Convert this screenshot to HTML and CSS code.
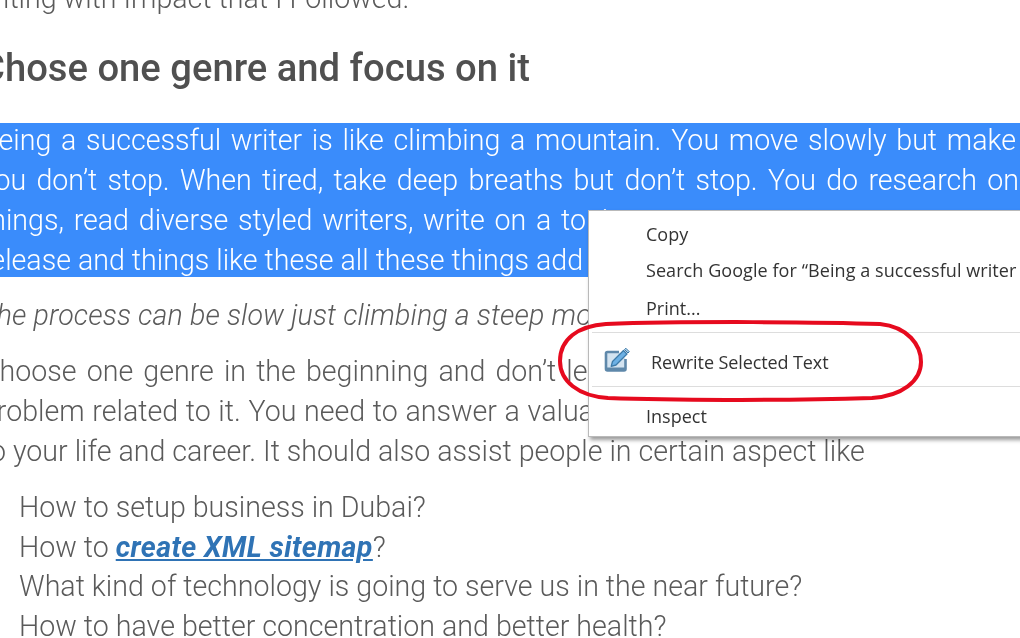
FILE: index.html
```html
<html lang="en">

<head>
    <meta charset="UTF-8">
    <meta name="viewport" content="width=device-width, initial-scale=1.0">
    <title>Rewrite Selected Text</title>
    <link rel="stylesheet" href="styles.css">
</head>

<body>
    <div class="page">
        <div class="article">
            <p class="intro">Writing with Impact that I Followed.</p>
            <h2 class="heading">Chose one genre and focus on it</h2>
            <div class="selected">
                <div class="selected-text">
                    <span class="line line-1">Being a successful writer is like climbing a mountain. You move slowly but make</span>
                    <span class="line line-2">you don’t stop. When tired, take deep breaths but don’t stop. You do research on</span>
                    <span class="line line-3">things, read diverse styled writers, write on a topic</span>
                    <span class="line line-4">release and things like these all these things add up</span>
                </div>
            </div>
            <p class="quote">The process can be slow just climbing a steep mountain</p>
            <div class="body-text">
                <span class="line line-5">Choose one genre in the beginning and don’t leave</span>
                <span class="line line-6">problem related to it. You need to answer a valuable</span>
                <span class="line line-7">to your life and career. It should also assist people in certain aspect like</span>
            </div>
            <ul class="questions">
                <li>How to setup business in Dubai?</li>
                <li>How to <a href="#" class="link">create XML sitemap</a>?</li>
                <li>What kind of technology is going to serve us in the near future?</li>
                <li>How to have better concentration and better health?</li>
            </ul>
        </div>

        <div class="menu">
            <div class="menu-item item-copy">Copy</div>
            <div class="menu-item item-search">Search Google for “Being a successful writer is like climbing”</div>
            <div class="menu-item item-print">Print...</div>
            <div class="menu-sep"></div>
            <div class="menu-item item-rewrite">
                <svg class="rewrite-icon" width="28" height="28" viewBox="0 0 28 28">
                    <path d="M16 6H4.500A1.500 1.500 0 0 0 3 7.500V23a1.500 1.500 0 0 0 1.500 1.500H21a1.500 1.500 0 0 0 1.500-1.500V13" fill="#d3e3f0" stroke="#5f88aa" stroke-width="2.600"/>
                    <path d="M3 21.500h19.500v3H3z" fill="#5f88aa"/>
                    <path d="M9.500 15.500L20.500 4.500l3.500 3.500L13 19l-4.800 1.300z" fill="#6cb0e4" stroke="#3d7aa8" stroke-width="1.300" stroke-linejoin="round"/>
                    <path d="M21.500 3.500l1.300-1.300 3.500 3.500L25 7z" fill="#a9cde8" stroke="#3d7aa8" stroke-width="1"/>
                </svg>
                <span>Rewrite Selected Text</span>
            </div>
            <div class="menu-sep sep-low"></div>
            <div class="menu-item item-inspect">Inspect</div>
        </div>

        <svg class="callout" width="380" height="90" viewBox="0 0 380 90">
            <path d="M50 5C130 2 270 3 324 5C352 8 365 26 365 43C365 62 346 77 316 79C220 82 110 81 52 79C22 77 4 62 4 42C4 20 22 7 50 5Z" fill="none" stroke="#e60a1e" stroke-width="4"/>
        </svg>
    </div>
</body>

</html>
```

FILE: styles.css
```css
html, body {
    margin: 0;
    padding: 0;
    background-color: #fff;
}
.page {
    position: relative;
    width: 1020px;
    height: 638px;
    overflow: hidden;
    background-color: #fff;
    font-family: Roboto, Arial, sans-serif;
    font-weight: 300;
    font-size: 28.6px;
    line-height: 40px;
    color: #5a5a5a;
    filter: blur(0.4px);
}
.article {
    margin-top: -22px;
}
.intro {
    margin: 0 0 0 -32px;
    height: 40px;
}
.heading {
    margin: 30px 0 0 -20px;
    font-size: 38.2px;
    line-height: 40px;
    font-weight: 500;
    color: #505050;
}
.selected {
    display: flow-root;
    margin-top: 35px;
    height: 154px;
    background-color: #3a8cfb;
    color: #fff;
}
.selected-text {
    margin-top: -3px;
}
.line {
    display: block;
    white-space: nowrap;
    margin-left: -19px;
    text-align: justify;
    text-align-last: justify;
}
.line-1 {
    width: 1035px;
}
.line-2 {
    width: 1038px;
}
.line-3 {
    width: 642px;
}
.line-4 {
    width: 639px;
}
.line-5, .line-6 {
    width: 650px;
}
.line-7 {
    text-align-last: left;
}
.quote {
    margin: 18px 0 0 -20px;
    font-style: italic;
    letter-spacing: 0.12px;
}
.body-text {
    margin-top: 16px;
}
.questions {
    list-style: none;
    margin: 16px 0 0;
    padding: 0 0 0 19px;
}
.questions li {
    height: 39.700px;
}
.link {
    color: #2f73b5;
    font-weight: 700;
    font-style: italic;
    letter-spacing: 0.4px;
}
.menu {
    position: absolute;
    left: 588px;
    top: 210px;
    width: 480px;
    height: 227px;
    box-sizing: border-box;
    background-color: #fff;
    border: 1px solid #b9b9b9;
    box-shadow: 2px 3px 4px rgba(0, 0, 0, 0.4);
    font-family: "Open Sans", Arial, sans-serif;
    font-weight: 400;
    font-size: 18px;
    line-height: 24px;
    color: #333;
}
.menu-item {
    padding-left: 57px;
    white-space: nowrap;
}
.item-copy {
    margin-top: 11px;
}
.item-search {
    margin-top: 12px;
    letter-spacing: 0.07px;
}
.item-print {
    margin-top: 14px;
}
.menu-sep {
    height: 1px;
    margin: 12px 0 0 3px;
    background-color: #ddd;
}
.item-rewrite {
    display: flex;
    align-items: center;
    gap: 20px;
    height: 53px;
    padding-left: 14px;
    padding-top: 4px;
    box-sizing: border-box;
    letter-spacing: -0.1px;
}
.rewrite-icon {
    margin-bottom: 4px;
}
.sep-low {
    margin-top: 0;
}
.item-inspect {
    margin-top: 17px;
}
.callout {
    position: absolute;
    left: 556px;
    top: 319px;
}
```
